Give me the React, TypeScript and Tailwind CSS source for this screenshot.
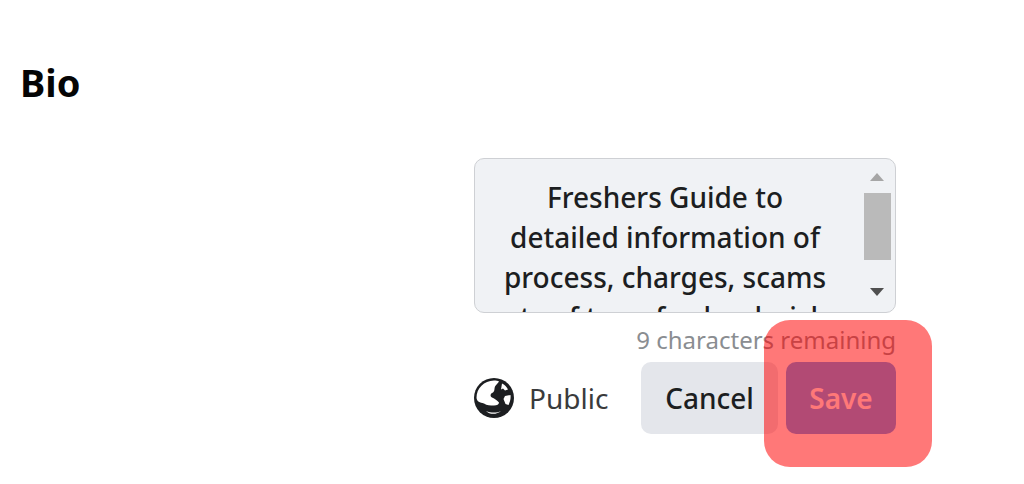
export default function App() {
  return (
    <div className="relative h-[484px] w-[1024px] overflow-hidden bg-white font-['Noto_Sans','Open_Sans',sans-serif] text-[#1c1e21]">
      <div className="pl-5 pt-[58px]">
        <h1 className="text-[38px] font-bold leading-[48px] text-[#050505]">Bio</h1>
      </div>
      <div className="ml-[474px] mt-[52px] w-[422px]">
        <div className="flex h-[155px] overflow-hidden rounded-[10px] border border-[#ced0d4] bg-[#f0f2f5]">
          <div className="w-[380px] shrink-0 pt-[18px] text-center text-[28px] font-medium leading-[40px] text-[#1c1e21]">
            <p className="whitespace-nowrap">Freshers Guide to</p>
            <p className="whitespace-nowrap">detailed information of</p>
            <p className="whitespace-nowrap">process, charges, scams</p>
            <p className="whitespace-nowrap">etc of transfer, bank risk</p>
          </div>
          <div className="ml-auto flex w-[32px] flex-col items-center pr-[4px] pt-[13px]">
            <svg width="16" height="10" viewBox="0 0 16 10" className="shrink-0 fill-[#a6a6a6]"><path d="M8 1 15 9H1Z" /></svg>
            <div className="mt-[11px] h-[67px] w-[27px] shrink-0 bg-[#bababa]" />
            <svg width="16" height="10" viewBox="0 0 16 10" className="mt-[27px] shrink-0 fill-[#505050]"><path d="M1 1H15L8 9Z" /></svg>
          </div>
        </div>
        <p className="mt-[10px] text-right text-[24px] leading-[34px] text-[#8a8d91]">9 characters remaining</p>
        <div className="mt-[5px] flex items-center">
          <svg width="40" height="40" viewBox="0 0 40 40" className="shrink-0">
            <circle cx="20" cy="20" r="20" fill="#1c1e21" />
            <path d="M2.5 20C2.5 10 10 3 20 2.5c2 0 4 .4 5 1-1 2-3 3-4 5-1 3 0 4-2 6-3 1-3 4-1 5 3 1 5 3 7 5 0 2-2 3-5 3-4 0-7 0-10-2-4-1-7.500-2-7.500-6Z" fill="#fff" />
            <path d="M28 5.500c2.500 1 5 3.500 6 6l-3 1-2-2-2 1ZM31 18l5.500-1c.5 3.500-.5 7-2 10l-3-1-2-5ZM12 33c5 2 11 2 15 0-4 3.500-11 4-15 0Z" fill="#fff" />
          </svg>
          <span className="ml-[15px] text-[28px] leading-[38px] text-[#3a3b3c]">Public</span>
          <button className="ml-auto flex h-[72px] w-[137px] items-center justify-center rounded-[10px] bg-[#e4e6eb] text-[28px] font-medium text-[#1c1e21]">Cancel</button>
          <button className="ml-[8px] flex h-[72px] w-[110px] items-center justify-center rounded-[10px] bg-[#5b9ef7] text-[28px] font-semibold text-white">Save</button>
        </div>
      </div>
      <div className="absolute left-[764px] top-[320px] h-[147px] w-[168px] rounded-[26px] bg-[#ff0000]/[0.53]" />
    </div>
  );
}
